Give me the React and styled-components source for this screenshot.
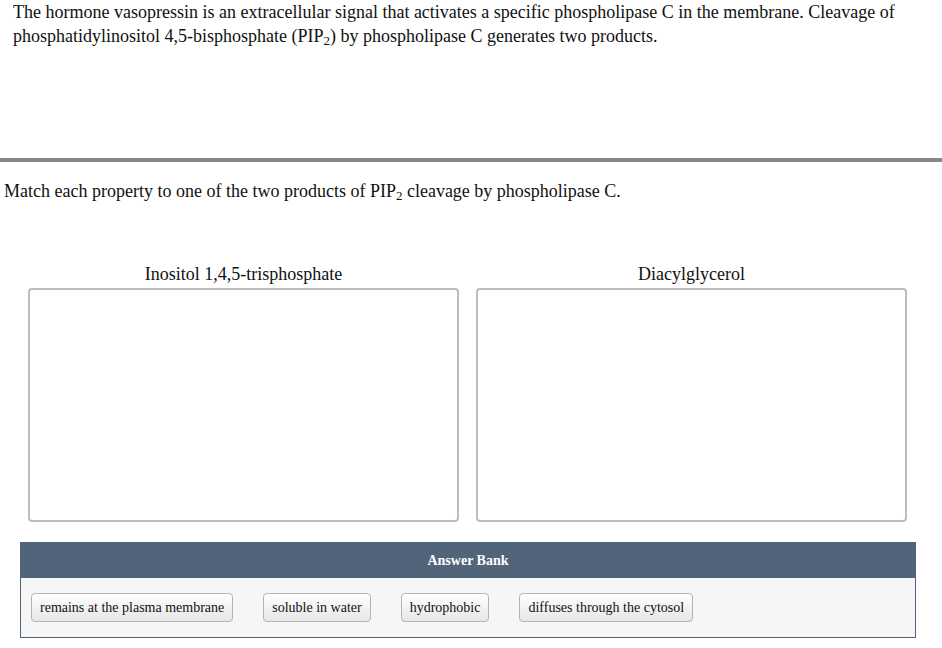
import React from "react";
import styled, { createGlobalStyle } from "styled-components";

const GlobalStyle = createGlobalStyle`
  html, body {
    margin: 0;
    padding: 0;
    background: #ffffff;
  }
  body {
    font-family: "Liberation Serif", "Times New Roman", serif;
    color: #111111;
  }
`;

const Page = styled.div`
  width: 942px;
  min-height: 648px;
  display: flex;
  flex-direction: column;
`;

const Intro = styled.p`
  margin: 0;
  padding: 0 13px;
  height: 158px;
  box-sizing: border-box;
  font-size: 18px;
  line-height: 24px;
`;

const Divider = styled.div`
  height: 4px;
  background: #878787;
`;

const Prompt = styled.p`
  margin: 17px 0 0 4px;
  font-size: 18px;
  line-height: 24px;
`;

const Sub = styled.sub`
  font-size: 13px;
  line-height: 0;
  vertical-align: -3px;
`;

const Columns = styled.div`
  display: grid;
  grid-template-columns: 431px 431px;
  column-gap: 17px;
  margin: 59px 0 0 28px;
`;

const Column = styled.div`
  display: flex;
  flex-direction: column;
  align-items: center;
`;

const ColumnTitle = styled.div`
  font-size: 18px;
  line-height: 24px;
  margin-bottom: 2px;
`;

const DropZone = styled.div`
  width: 100%;
  height: 234px;
  box-sizing: border-box;
  border: 2px solid #bdbdbd;
  border-radius: 4px;
  background: #ffffff;
`;

const Bank = styled.div`
  margin: 20px 0 0 20px;
  width: 896px;
  box-sizing: border-box;
  border: 1px solid #4f6279;
`;

const BankHeader = styled.div`
  height: 35px;
  background: #516479;
  color: #ffffff;
  font-weight: bold;
  font-size: 14px;
  display: flex;
  align-items: center;
  justify-content: center;
`;

const BankBody = styled.div`
  background: #f6f6f6;
  padding: 15px 10px 15px 10px;
  display: flex;
  flex-wrap: wrap;
  gap: 30px;
`;

const Chip = styled.div`
  height: 29px;
  box-sizing: border-box;
  padding: 0 8px;
  border: 1px solid #b4b4b4;
  border-radius: 4px;
  background: linear-gradient(#ffffff, #e6e6e6);
  font-size: 14px;
  display: flex;
  align-items: center;
  white-space: nowrap;
`;

const answers = [
  "remains at the plasma membrane",
  "soluble in water",
  "hydrophobic",
  "diffuses through the cytosol",
];

export default function App() {
  return (
    <Page>
      <GlobalStyle />
      <Intro>
        The hormone vasopressin is an extracellular signal that activates a
        specific phospholipase C in the membrane. Cleavage of
        phosphatidylinositol 4,5-bisphosphate (PIP<Sub>2</Sub>) by
        phospholipase C generates two products.
      </Intro>
      <Divider />
      <Prompt>
        Match each property to one of the two products of PIP<Sub>2</Sub>{" "}
        cleavage by phospholipase C.
      </Prompt>
      <Columns>
        <Column>
          <ColumnTitle>Inositol 1,4,5-trisphosphate</ColumnTitle>
          <DropZone />
        </Column>
        <Column>
          <ColumnTitle>Diacylglycerol</ColumnTitle>
          <DropZone />
        </Column>
      </Columns>
      <Bank>
        <BankHeader>Answer Bank</BankHeader>
        <BankBody>
          {answers.map((a) => (
            <Chip key={a}>{a}</Chip>
          ))}
        </BankBody>
      </Bank>
    </Page>
  );
}
